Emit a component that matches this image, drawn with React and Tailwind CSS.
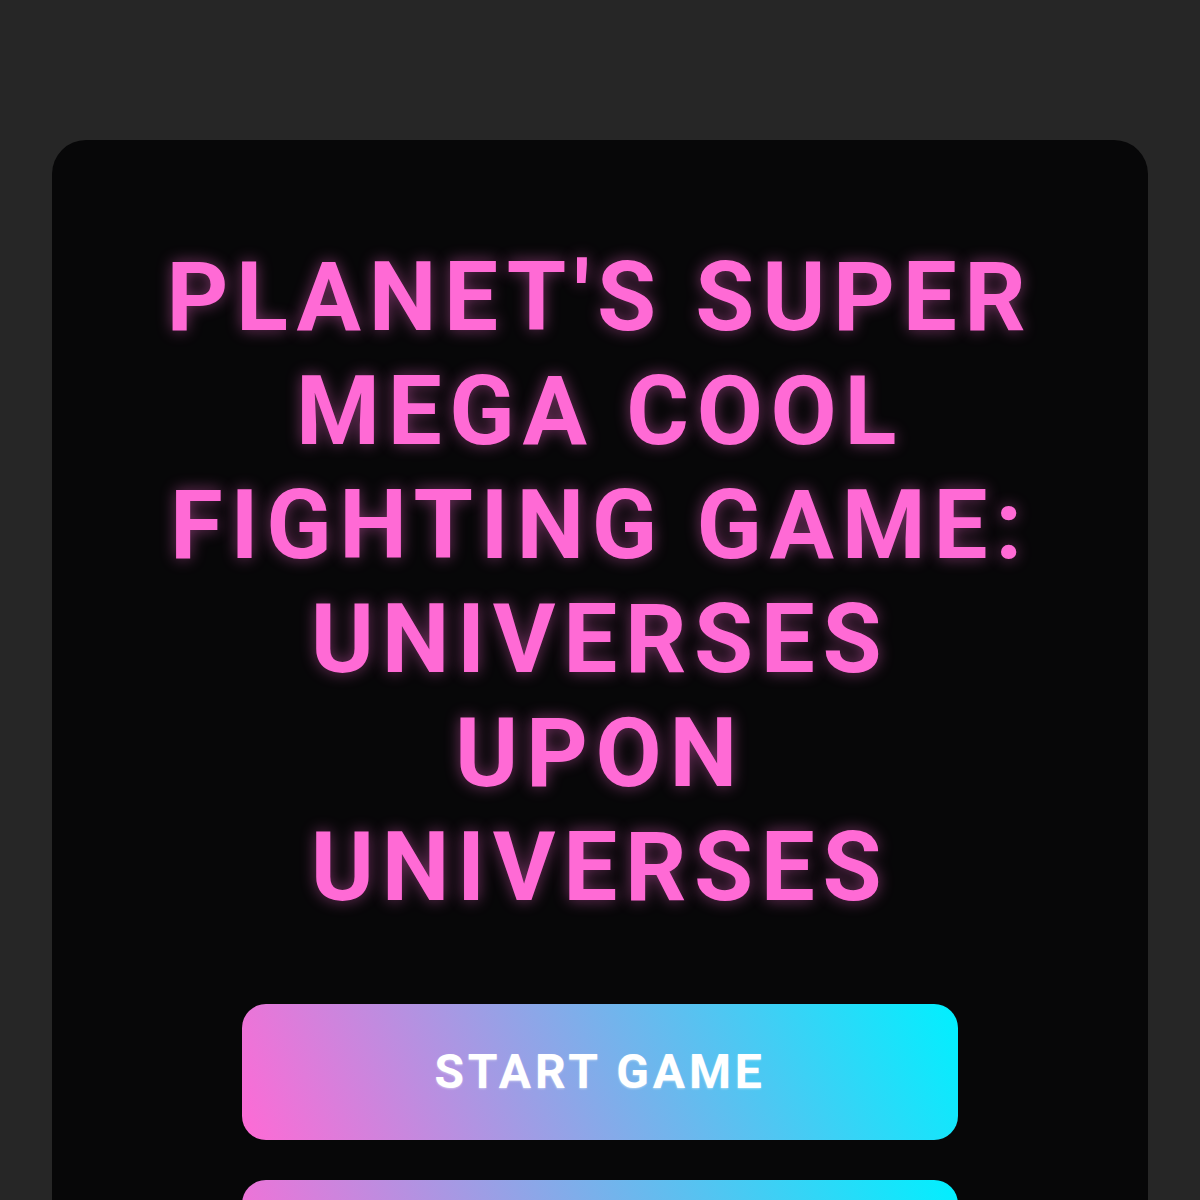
const Button = ({ children }) => (
  <button className="w-[716px] h-[136px] rounded-[24px] bg-linear-[65deg,#ff6ad5,#00f0ff] text-white text-[48px] font-bold tracking-[0.08em] leading-none [text-shadow:0_1px_2px_rgba(255,255,255,0.4)]">
    {children}
  </button>
);

export default function App() {
  return (
    <div className="min-h-screen bg-[#262626] px-[52px] pt-[140px] font-['Roboto',sans-serif]">
      <div className="bg-[#070708] rounded-[34px] flex flex-col items-center pt-[100px] pb-20">
        <h1 className="w-[880px] text-center text-[96px] leading-[114px] font-bold tracking-[0.08em] text-[#ff6ad5] [text-shadow:0_0_16px_rgba(255,106,213,0.45)]">
          PLANET'S SUPER MEGA COOL FIGHTING GAME: UNIVERSES UPON UNIVERSES
        </h1>
        <div className="mt-[80px] flex flex-col gap-10">
          <Button>START GAME</Button>
          <Button>OPTIONS</Button>
        </div>
      </div>
    </div>
  );
}
